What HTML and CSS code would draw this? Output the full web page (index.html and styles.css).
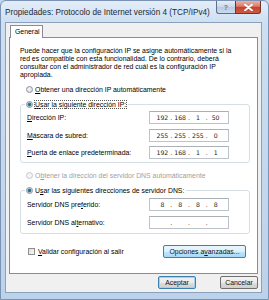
FILE: index.html
```html
<!DOCTYPE html>
<html lang="es">
<head>
<meta charset="utf-8">
<title>Propiedades: Protocolo de Internet versión 4 (TCP/IPv4)</title>
<link rel="stylesheet" href="styles.css">
</head>
<body>
<div class="window">
  <div class="titlebar">
    <span class="title">Propiedades: Protocolo de Internet versión 4 (TCP/IPv4)</span>
    <div class="caption">
      <span class="cbtn help">?</span>
      <span class="cbtn close"><svg width="9" height="7" viewBox="0 0 9 7"><path d="M1 0.5 L8 6.5 M8 0.5 L1 6.5" stroke="#fff" stroke-width="1.8" stroke-linecap="round"/></svg></span>
    </div>
  </div>
  <div class="client">
    <div class="tabs"><span class="tab">General</span></div>
    <div class="panel">
      <p class="intro">Puede hacer que la configuración IP se asigne automáticamente si la<br>red es compatible con esta funcionalidad. De lo contrario, deberá<br>consultar con el administrador de red cuál es la configuración IP<br>apropiada.</p>
      <div class="option first"><span class="radio"></span><span><u>O</u>btener una dirección IP automáticamente</span></div>
      <div class="group ipgroup">
        <div class="legend"><span class="radio on"></span><span class="focus"><u>U</u>sar la siguiente dirección IP:</span></div>
        <div class="rows">
          <div class="row"><span><u>D</u>irección IP:</span><span class="ip"><i>192</i><b>.</b><i>168</i><b>.</b><i>1</i><b>.</b><i>50</i></span></div>
          <div class="row"><span><u>M</u>áscara de subred:</span><span class="ip"><i>255</i><b>.</b><i>255</i><b>.</b><i>255</i><b>.</b><i>0</i></span></div>
          <div class="row"><span><u>P</u>uerta de enlace predeterminada:</span><span class="ip"><i>192</i><b>.</b><i>168</i><b>.</b><i>1</i><b>.</b><i>1</i></span></div>
        </div>
      </div>
      <div class="option disabled"><span class="radio dis"></span><span>O<u>b</u>tener la dirección del servidor DNS automáticamente</span></div>
      <div class="group dnsgroup">
        <div class="legend"><span class="radio on"></span><span>U<u>s</u>ar las siguientes direcciones de servidor DNS:</span></div>
        <div class="rows dnsrows">
          <div class="row"><span>Servidor DNS pre<u>f</u>erido:</span><span class="ip"><i>8</i><b>.</b><i>8</i><b>.</b><i>8</i><b>.</b><i>8</i></span></div>
          <div class="row"><span>Servidor DNS al<u>t</u>ernativo:</span><span class="ip"><i></i><b>.</b><i></i><b>.</b><i></i><b>.</b><i></i></span></div>
        </div>
      </div>
      <div class="bottomrow">
        <div class="check"><span class="box"></span><span><u>V</u>alidar configuración al salir</span></div>
        <span class="btn adv">Opciones a<u>v</u>anzadas...</span>
      </div>
    </div>
    <div class="footer">
      <span class="btn default">Aceptar</span>
      <span class="btn">Cancelar</span>
    </div>
  </div>
</div>
</body>
</html>
```

FILE: styles.css
```css
* { box-sizing: border-box; }
html, body { margin: 0; padding: 0; }
body {
  width: 269px;
  height: 300px;
  overflow: hidden;
  font-family: "Liberation Sans", Arial, sans-serif;
  font-size: 6.9px;
  color: #000;
  background: #c2d6ec;
}
.window {
  width: 269px;
  height: 300px;
  display: flex;
  flex-direction: column;
  background: linear-gradient(to bottom, #e3edf8 0px, #cddff1 22px, #bcd2ea 100%);
  border: 1px solid #7a93b4;
  border-radius: 6px 6px 0 0;
}
.titlebar {
  height: 21px;
  display: flex;
  align-items: flex-start;
  padding-left: 4px;
}
.title {
  font-size: 8.2px;
  margin-top: 7px;
  color: #1e2733;
  white-space: nowrap;
}
.caption {
  margin-left: auto;
  margin-right: 7px;
  display: flex;
}
.cbtn {
  height: 13px;
  display: flex;
  align-items: center;
  justify-content: center;
  border: 1px solid #5c6f8a;
  border-top: none;
}
.help {
  width: 19px;
  border-radius: 0 0 0 3px;
  border-right: none;
  background: linear-gradient(to bottom, #e6eef8 0%, #c9d8ea 50%, #b6cbe3 51%, #c9dbee 100%);
  color: #6b7b92;
  font-size: 7px;
  font-weight: bold;
}
.close {
  width: 26px;
  border-radius: 0 0 3px 0;
  border-color: #7a3128;
  background: linear-gradient(to bottom, #eab3a8 0%, #d87a68 45%, #c2422c 50%, #d2593c 100%);
}
.client {
  flex: 1;
  margin: 0 6px 6px 4px;
  background: #f0f0f0;
  border: 1px solid #8aa0bd;
  padding: 2px 3px 0 3px;
  display: flex;
  flex-direction: column;
}
.tabs {
  display: flex;
  height: 12px;
  padding-left: 1px;
}
.tab {
  width: 33px;
  height: 13px;
  background: #fff;
  border: 1px solid #898c95;
  border-bottom: none;
  padding: 2px 0 0 4px;
  position: relative;
  z-index: 1;
}
.panel {
  background: #fff;
  border: 1px solid #898c95;
  height: 237px;
  padding: 9px 7px 0 10px;
  display: flex;
  flex-direction: column;
}
.intro {
  margin: 0;
  line-height: 8px;
  white-space: nowrap;
}
u { text-decoration: underline; text-underline-offset: 1px; }
.option {
  display: flex;
  align-items: center;
  height: 8px;
  margin-left: 6px;
  gap: 2px;
}
.option.first { margin-top: 6px; }
.option.disabled { margin-top: 8px; color: #a0a0a0; }
.radio {
  width: 7px;
  height: 7px;
  border-radius: 50%;
  border: 1px solid #8d939b;
  background: radial-gradient(circle at 40% 40%, #f4f4f4, #d6d9dc);
  display: inline-block;
  flex: none;
}
.radio.on {
  background: radial-gradient(circle, #1f5b78 0, #3a88a8 1.6px, #e8edf0 2.4px, #dfe3e6 100%);
}
.radio.dis { border-color: #c4c7cb; background: #f4f4f4; }
.group {
  border: 1px solid #d5dfe5;
  border-radius: 3px;
}
.ipgroup { margin-top: 11px; }
.dnsgroup { margin-top: 11px; }
.legend {
  display: flex;
  align-items: center;
  gap: 2px;
  height: 8px;
  margin-top: -5px;
  margin-left: 4px;
  padding: 0 2px 0 1px;
  background: #fff;
  align-self: flex-start;
  width: max-content;
}
.focus {
  outline: 1px dotted #555;
  outline-offset: 0;
}
.rows {
  display: flex;
  flex-direction: column;
  gap: 4.5px;
  padding: 3px 20px 3px 6px;
}
.dnsrows { gap: 5px; padding-top: 4px; padding-bottom: 4px; }
.row {
  display: flex;
  align-items: center;
  justify-content: space-between;
}
.ip {
  width: 80px;
  height: 13px;
  border: 1px solid #bcc3ca;
  border-top-color: #aab0b7;
  background: #fff;
  display: flex;
  align-items: center;
  justify-content: center;
  padding: 0 6px;
  font-family: "DejaVu Sans", sans-serif;
  font-size: 6.2px;
  color: #222;
}
.ip i {
  font-style: normal;
  width: 13px;
  text-align: center;
}
.ip b {
  font-weight: normal;
  width: 5px;
  text-align: center;
}
.bottomrow {
  display: flex;
  align-items: center;
  justify-content: space-between;
  margin-top: 11px;
  padding-right: 4px;
}
.check {
  display: flex;
  align-items: center;
  gap: 3px;
  margin-left: 8px;
}
.box {
  width: 7px;
  height: 7px;
  border: 1px solid #8e8f8f;
  background: linear-gradient(135deg, #dcdcdc, #f8f8f8);
}
.btn {
  height: 13px;
  display: flex;
  align-items: center;
  justify-content: center;
  border: 1px solid #707070;
  border-radius: 2px;
  background: linear-gradient(to bottom, #f2f2f2 0%, #ebebeb 50%, #dddddd 51%, #cfcfcf 100%);
  color: #111;
}
.adv {
  width: 83px;
  border-color: #3c7fb1;
  background: linear-gradient(to bottom, #eaf6fd 0%, #d9f0fc 50%, #bee6fd 51%, #a7d9f5 100%);
}
.footer {
  display: flex;
  justify-content: flex-end;
  gap: 24px;
  padding-top: 2px;
  padding-right: 0;
}
.footer .btn { width: 38px; }
.btn.default {
  border-color: #3c7fb1;
  box-shadow: inset 0 0 0 1px #9ed3f2;
}
```
